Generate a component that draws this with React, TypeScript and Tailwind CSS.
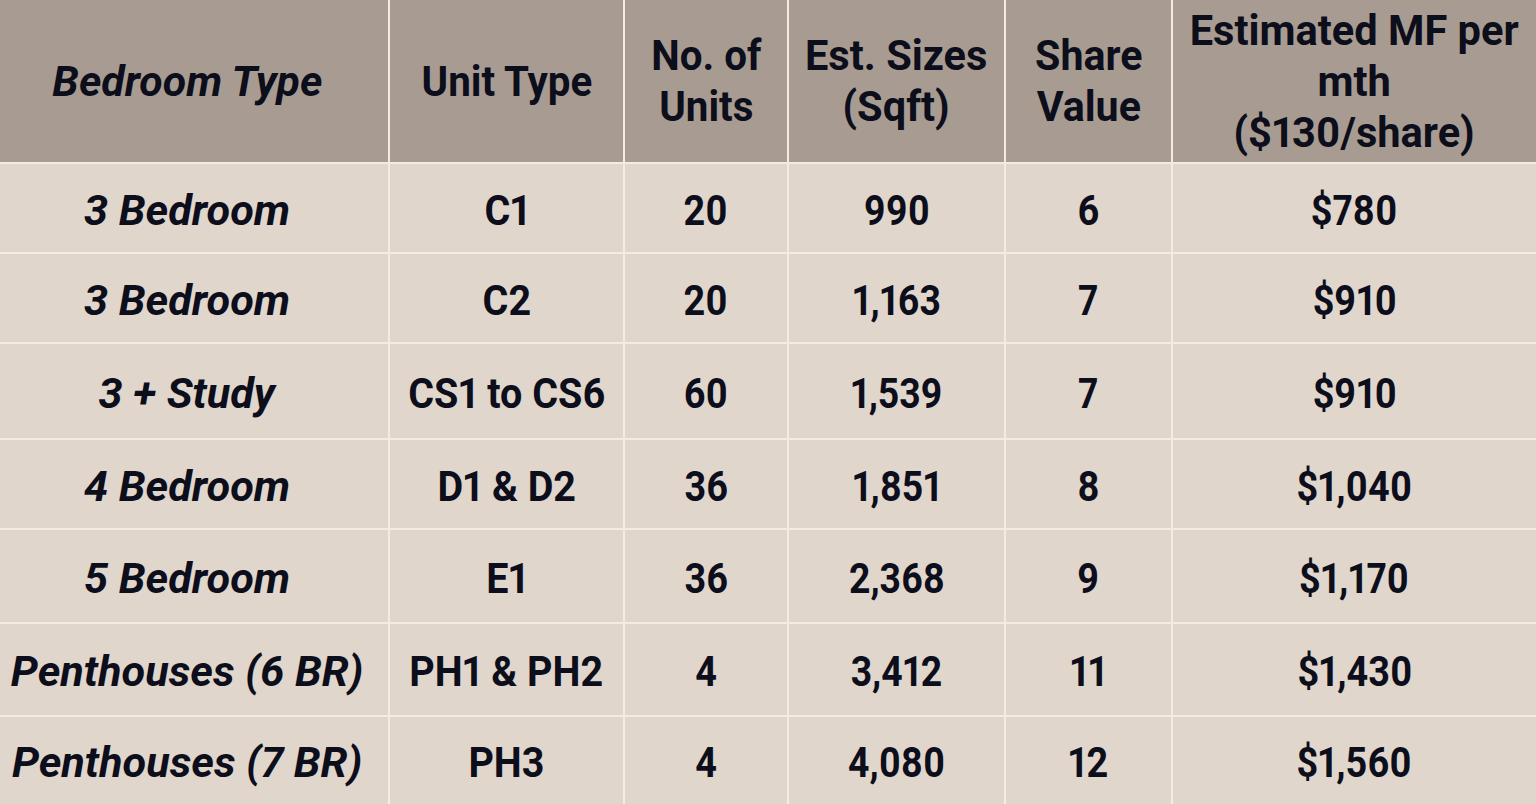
import React from "react";

const rows = [
  ["3 Bedroom", "C1", "20", "990", "6", "$780"],
  ["3 Bedroom", "C2", "20", "1,163", "7", "$910"],
  ["3 + Study", "CS1 to CS6", "60", "1,539", "7", "$910"],
  ["4 Bedroom", "D1 & D2", "36", "1,851", "8", "$1,040"],
  ["5 Bedroom", "E1", "36", "2,368", "9", "$1,170"],
  ["Penthouses (6 BR)", "PH1 & PH2", "4", "3,412", "11", "$1,430"],
  ["Penthouses (7 BR)", "PH3", "4", "4,080", "12", "$1,560"],
];

const cellScale = [
  "italic scale-x-[1.03]",
  "scale-x-[0.94]",
  "scale-x-[0.9]",
  "scale-x-[0.89]",
  "scale-x-[0.9]",
  "scale-x-[0.9]",
];

function Head({ children, cls, first }: { children: React.ReactNode; cls: string; first?: boolean }) {
  return (
    <div className={"bg-[#a89c92] flex items-center justify-center" + (first ? " pr-[14px]" : "")}>
      <span className={"inline-block text-center whitespace-nowrap " + cls}>{children}</span>
    </div>
  );
}

export default function App() {
  return (
    <div
      className="w-[1536px] h-[804px] overflow-hidden bg-[#f3ece4] grid grid-cols-[388px_233px_162px_215px_165px_363px] grid-rows-[162px_88px_88px_94px_88px_92px_91px_87px] gap-[2px] text-[#0d0e1b] font-bold text-[42px] leading-[51px] proportional-nums"
      style={{ fontFamily: 'Roboto, "DejaVu Sans Condensed", sans-serif' }}
    >
      <Head first cls="italic scale-x-[1.02]">Bedroom Type</Head>
      <Head cls="scale-x-[0.96]">Unit Type</Head>
      <Head cls="scale-x-[0.96]">
        No. of<br />Units
      </Head>
      <Head cls="scale-x-[0.99]">
        Est. Sizes<br />(Sqft)
      </Head>
      <Head cls="scale-x-[0.98]">
        Share<br />Value
      </Head>
      <Head cls="scale-x-[0.99]">
        Estimated MF per<br />mth<br />($130/share)
      </Head>
      {rows.map((r, i) =>
        r.map((c, j) => (
          <div
            key={i + "-" + j}
            className={"bg-[#e0d6cc] flex items-center justify-center" + (j === 0 ? " pr-[14px]" : "")}
          >
            <span className={"inline-block whitespace-nowrap pt-[4px] " + cellScale[j]}>{c}</span>
          </div>
        ))
      )}
    </div>
  );
}
